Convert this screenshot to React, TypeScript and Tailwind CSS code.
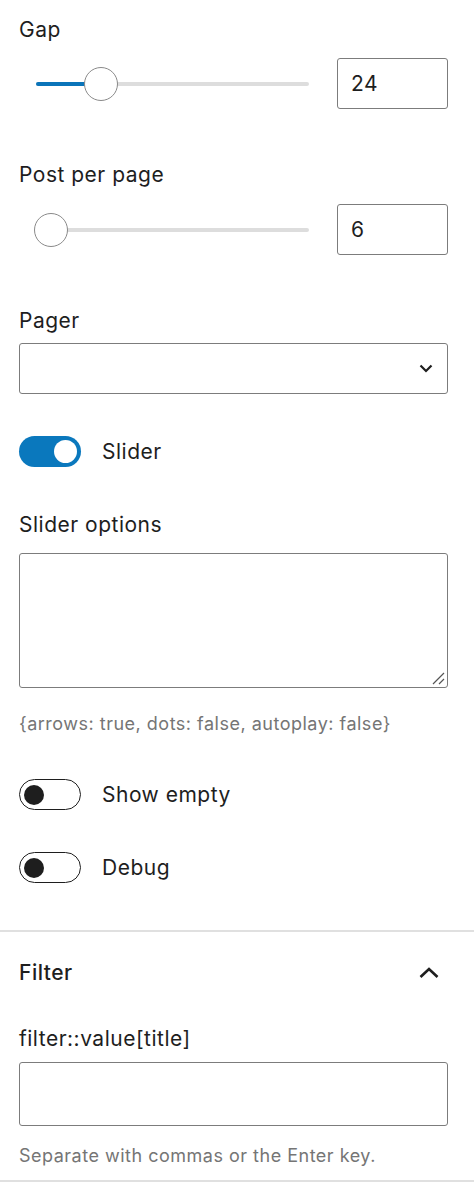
import React from "react";

function Label({ children, className = "" }: { children: React.ReactNode; className?: string }) {
  return <div className={`h-[24px] text-[21px] leading-[24px] text-[#1e1e1e] ${className}`}>{children}</div>;
}

function Help({ children, className = "" }: { children: React.ReactNode; className?: string }) {
  return (
    <div className={`h-[20px] text-[18px] leading-[20px] tracking-[0.5px] text-[#757575] ${className}`}>{children}</div>
  );
}

function RangeRow({ value, thumbLeft, fill }: { value: string; thumbLeft: string; fill: string }) {
  return (
    <div className="flex items-center h-[51px]">
      <div className="flex-1 pl-[17px] pr-[28px]">
        <div className="relative h-[34px]">
          <div className="absolute left-0 right-0 top-[15px] h-[4px] rounded-full bg-[#dddddd]" />
          <div className={`absolute left-0 top-[15px] h-[4px] rounded-l-full bg-[#0a74b9] ${fill}`} />
          <div
            className={`absolute top-0 h-[34px] w-[34px] rounded-full border-[1.5px] border-[#8a8a8a] bg-white ${thumbLeft}`}
          />
        </div>
      </div>
      <div className="w-[111px] h-[51px] flex items-center rounded-[3px] border-[1.5px] border-[#7c7c7c] pl-[13px] text-[21px] text-[#1e1e1e]">
        {value}
      </div>
    </div>
  );
}

function Toggle({ on, label }: { on: boolean; label: string }) {
  return (
    <div className="flex items-center h-[31px]">
      {on ? (
        <div className="w-[62px] h-[31px] rounded-full bg-[#0a78bd] flex items-center justify-end pr-[4px]">
          <div className="w-[23px] h-[23px] rounded-full bg-white" />
        </div>
      ) : (
        <div className="w-[62px] h-[31px] rounded-full border-[1.5px] border-[#1e1e1e] flex items-center pl-[4px]">
          <div className="w-[20px] h-[20px] rounded-full bg-[#1e1e1e]" />
        </div>
      )}
      <span className="ml-[21px] text-[21px] text-[#1e1e1e]">{label}</span>
    </div>
  );
}

export default function App() {
  return (
    <div className="w-[474px] h-[1183px] bg-white overflow-hidden font-[Inter,'Noto_Sans',sans-serif] tracking-[0.5px]">
      <div className="pl-[19px] pr-[26px]">
        <Label className="mt-[18px]">Gap</Label>
        <div className="mt-[16px]">
          <RangeRow value="24" thumbLeft="left-[48px]" fill="w-[50px]" />
        </div>

        <Label className="mt-[54px]">Post per page</Label>
        <div className="mt-[17px]">
          <RangeRow value="6" thumbLeft="left-[-2px]" fill="w-0" />
        </div>

        <Label className="mt-[54px]">Pager</Label>
        <div className="mt-[10px] h-[51px] rounded-[3px] border-[1.5px] border-[#7c7c7c] flex items-center justify-end pr-[14px]">
          <svg width="14" height="9" viewBox="0 0 14 9" fill="none">
            <path d="M1.5 1.5 L7 7 L12.5 1.5" stroke="#1e1e1e" strokeWidth="2.2" />
          </svg>
        </div>

        <div className="mt-[42px]">
          <Toggle on label="Slider" />
        </div>

        <Label className="mt-[46px]">Slider options</Label>
        <div className="mt-[16px] h-[135px] rounded-[3px] border-[1.5px] border-[#7c7c7c] flex items-end justify-end p-[2px]">
          <svg width="14" height="14" viewBox="0 0 14 14" fill="none">
            <path d="M2 13 L13 2 M8 13 L13 8" stroke="#555" strokeWidth="1.2" />
          </svg>
        </div>
        <Help className="mt-[26px]">{"{arrows: true, dots: false, autoplay: false}"}</Help>

        <div className="mt-[45px]">
          <Toggle on={false} label="Show empty" />
        </div>
        <div className="mt-[42px]">
          <Toggle on={false} label="Debug" />
        </div>
      </div>

      <div className="mt-[47px] border-t-2 border-[#e0e0e0] pl-[19px] pr-[26px]">
        <div className="mt-[29px] flex items-center justify-between h-[24px]">
          <span className="text-[21px] leading-[24px] font-medium text-[#1e1e1e]">Filter</span>
          <svg width="20" height="12" viewBox="0 0 20 12" fill="none" className="mr-[9px]">
            <path d="M1.5 10 L10 2 L18.5 10" stroke="#1e1e1e" strokeWidth="2.6" />
          </svg>
        </div>
        <Label className="mt-[42px]">filter::value[title]</Label>
        <div className="mt-[11px] h-[64px] rounded-[3px] border-[1.5px] border-[#7c7c7c]" />
        <Help className="mt-[20px]">Separate with commas or the Enter key.</Help>
      </div>
      <div className="mt-[14px] border-t-2 border-[#e0e0e0]" />
    </div>
  );
}
